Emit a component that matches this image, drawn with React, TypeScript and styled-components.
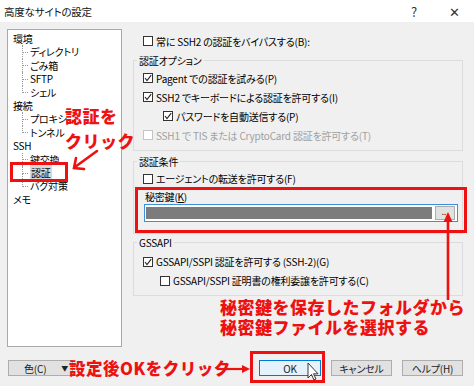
import React from 'react';
import styled, { createGlobalStyle, css } from 'styled-components';

// ベースのUIフォント
const UI_FONT = `"Noto Sans CJK JP", "Noto Sans", sans-serif`;
const RED = '#ee1111';

const GlobalStyle = createGlobalStyle`
  html, body {
    margin: 0;
    padding: 0;
    background: #f0f0f0;
  }
  #root {
    width: 474px;
    height: 386px;
  }
`;

const Window = styled.div`
  position: relative;
  width: 474px;
  height: 386px;
  background: #f0f0f0;
  font-family: ${UI_FONT};
  font-size: 10px;
  letter-spacing: -0.2px;
  font-feature-settings: 'palt';
  color: #000;
  overflow: hidden;
  display: flex;
  flex-direction: column;
  box-sizing: border-box;
`;

const TitleBar = styled.div`
  height: 22px;
  background: #fff;
  display: flex;
  align-items: center;
  padding-left: 4px;
  font-size: 10.5px;
  color: #111;
`;

const Title = styled.div`
  flex: 1;
`;

const TitleButton = styled.div`
  width: 40px;
  text-align: center;
  font-size: 13px;
  color: #333;
`;

const Main = styled.div`
  display: flex;
  gap: 11px;
  padding: 7px 0 0 7px;
`;

const Tree = styled.div`
  width: 115px;
  height: 318px;
  box-sizing: border-box;
  background: #fff;
  border: 1px solid #a9a9a9;
  padding-top: 2px;
`;

const TreeItem = styled.div<{ $child?: boolean; $last?: boolean }>`
  position: relative;
  height: 13.4px;
  line-height: 13.4px;
  padding-left: ${p => (p.$child ? 22 : 5)}px;
  white-space: nowrap;
  ${p =>
    p.$child &&
    css`
      &::before {
        content: '';
        position: absolute;
        left: 14px;
        top: 0;
        width: 5px;
        height: 50%;
        border-left: 1px dotted #9a9a9a;
        border-bottom: 1px dotted #9a9a9a;
      }
    `}
  ${p =>
    p.$child &&
    !p.$last &&
    css`
      &::after {
        content: '';
        position: absolute;
        left: 14px;
        top: 50%;
        bottom: 0;
        border-left: 1px dotted #9a9a9a;
      }
    `}
`;

const Selected = styled.span`
  background: #d9d9d9;
  padding: 0 1px;
`;

const Right = styled.div`
  width: 330px;
  display: flex;
  flex-direction: column;
  padding-top: 5px;
`;

const Row = styled.div<{ $indent?: number; $h?: number; $disabled?: boolean }>`
  display: flex;
  align-items: center;
  gap: 3px;
  height: ${p => p.$h ?? 19}px;
  padding-left: ${p => p.$indent ?? 9}px;
  color: ${p => (p.$disabled ? '#a0a0a0' : '#000')};
  white-space: nowrap;
`;

const Box = styled.span<{ $disabled?: boolean }>`
  width: 10px;
  height: 10px;
  box-sizing: border-box;
  border: 1px solid ${p => (p.$disabled ? '#c4c4c4' : '#333')};
  background: #fff;
  display: inline-flex;
  align-items: center;
  justify-content: center;
  flex: none;
`;

const Check = ({ checked, disabled }: { checked?: boolean; disabled?: boolean }) => (
  <Box $disabled={disabled}>
    {checked && (
      <svg width="8" height="8" viewBox="0 0 8 8">
        <polyline points="1,4 3,6.5 7.2,1.2" fill="none" stroke="#222" strokeWidth="1.1" />
      </svg>
    )}
  </Box>
);

const Group = styled.fieldset<{ $mt: number; $pt: number; $pb: number }>`
  margin: ${p => p.$mt}px 0 0 0;
  padding: ${p => p.$pt}px 0 ${p => p.$pb}px 0;
  border: 1px solid #dcdcdc;
  min-width: 0;
`;

const Legend = styled.legend`
  margin-left: 3px;
  padding: 0 2px;
  line-height: 13px;
  font-size: 10px;
`;

const KeyLabel = styled.div`
  height: 14px;
  line-height: 14px;
  margin-top: 1.5px;
  padding-left: 11px;
`;

const KeyField = styled.div`
  margin-left: 10px;
  width: 314px;
  height: 18px;
  box-sizing: border-box;
  border: 1px solid #3c8fdc;
  background: #fff;
  display: flex;
  align-items: center;
  gap: 3px;
  padding: 0 2px 0 1px;
`;

const KeyValue = styled.div`
  flex: 1;
  height: 12px;
  background: #7c7c7c;
`;

const BrowseButton = styled.div`
  width: 20px;
  height: 14px;
  box-sizing: border-box;
  background: #e1e1e1;
  border: 1px solid #adadad;
  font-size: 9px;
  line-height: 10px;
  text-align: center;
  color: #333;
`;

const Footer = styled.div`
  display: flex;
  align-items: center;
  gap: 10px;
  padding: 13px 11px 0 8px;
`;

const Button = styled.div<{ $w: number; $primary?: boolean }>`
  width: ${p => p.$w}px;
  height: 16px;
  box-sizing: border-box;
  background: ${p => (p.$primary ? '#e5f1fb' : '#e1e1e1')};
  border: 1px solid ${p => (p.$primary ? '#0078d7' : '#adadad')};
  display: flex;
  align-items: center;
  justify-content: center;
  font-size: 10px;
  color: #222;
  white-space: nowrap;
`;

const ColorButton = styled(Button)`
  justify-content: space-between;
  padding: 0 4px 0 15px;
`;

const Caret = styled.span`
  font-size: 7px;
  color: #222;
`;

const Spacer = styled.div`
  flex: 1;
`;

// 赤い注釈（スクショの上に重ねたもの）
const Note = styled.div<{ $x: number; $y: number; $size?: number }>`
  position: absolute;
  left: ${p => p.$x}px;
  top: ${p => p.$y}px;
  font-family: ${UI_FONT};
  font-feature-settings: normal;
  font-weight: 900;
  font-size: ${p => p.$size ?? 17}px;
  line-height: 1;
  letter-spacing: 0.5px;
  color: ${RED};
  white-space: nowrap;
`;

const RedFrame = styled.div<{ $x: number; $y: number; $w: number; $h: number }>`
  position: absolute;
  left: ${p => p.$x}px;
  top: ${p => p.$y}px;
  width: ${p => p.$w}px;
  height: ${p => p.$h}px;
  box-sizing: border-box;
  border: 3px solid ${RED};
`;

const Overlay = styled.svg`
  position: absolute;
  left: 0;
  top: 0;
  pointer-events: none;
`;

function App() {
  return (
    <>
      <GlobalStyle />
      <Window>
        <TitleBar>
          <Title>高度なサイトの設定</Title>
          <TitleButton>?</TitleButton>
          <TitleButton>✕</TitleButton>
        </TitleBar>

        <Main>
          <Tree>
            <TreeItem>環境</TreeItem>
            <TreeItem $child>ディレクトリ</TreeItem>
            <TreeItem $child>ごみ箱</TreeItem>
            <TreeItem $child>SFTP</TreeItem>
            <TreeItem $child $last>シェル</TreeItem>
            <TreeItem>接続</TreeItem>
            <TreeItem $child>プロキシ</TreeItem>
            <TreeItem $child $last>トンネル</TreeItem>
            <TreeItem>SSH</TreeItem>
            <TreeItem $child>鍵交換</TreeItem>
            <TreeItem $child>
              <Selected>認証</Selected>
            </TreeItem>
            <TreeItem $child $last>バグ対策</TreeItem>
            <TreeItem>メモ</TreeItem>
          </Tree>

          <Right>
            <Row $h={14} $indent={10}>
              <Check />
              常に SSH2 の認証をバイパスする(B):
            </Row>

            <Group $mt={5.5} $pt={2} $pb={5}>
              <Legend>認証オプション</Legend>
              <Row>
                <Check checked />
                Pagent での認証を試みる(P)
              </Row>
              <Row>
                <Check checked />
                SSH2 でキーボードによる認証を許可する(I)
              </Row>
              <Row $indent={29}>
                <Check checked />
                パスワードを自動送信する(P)
              </Row>
              <Row $disabled>
                <Check disabled />
                SSH1 で TIS または CryptoCard 認証を許可する(T)
              </Row>
            </Group>

            <Group $mt={4.5} $pt={1} $pb={11}>
              <Legend>認証条件</Legend>
              <Row>
                <Check />
                エージェントの転送を許可する(F)
              </Row>
              <KeyLabel>
                秘密鍵(<u>K</u>)
              </KeyLabel>
              <KeyField>
                <KeyValue />
                <BrowseButton>...</BrowseButton>
              </KeyField>
            </Group>

            <Group $mt={2.5} $pt={3} $pb={5}>
              <Legend>GSSAPI</Legend>
              <Row>
                <Check checked />
                GSSAPI/SSPI 認証を許可する (SSH-2)(G)
              </Row>
              <Row $indent={26}>
                <Check />
                GSSAPI/SSPI 証明書の権利委譲を許可する(C)
              </Row>
            </Group>
          </Right>
        </Main>

        <Footer>
          <ColorButton $w={65}>
            色(C)
            <Caret>▼</Caret>
          </ColorButton>
          <Spacer />
          <Button $w={62} $primary>
            OK
          </Button>
          <Button $w={61}>キャンセル</Button>
          <Button $w={61}>ヘルプ(H)</Button>
        </Footer>

        {/* 注釈 */}
        <RedFrame $x={10} $y={162} $w={58} $h={20} />
        <RedFrame $x={135} $y={187} $w={332} $h={46} />
        <RedFrame $x={250} $y={351} $w={75} $h={32} />

        <Note $x={65} $y={107}>認証を</Note>
        <Note $x={65} $y={132}>クリック</Note>
        <Note $x={220} $y={298}>秘密鍵を保存したフォルダから</Note>
        <Note $x={220} $y={318}>秘密鍵ファイルを選択する</Note>
        <Note $x={69} $y={360} $size={16.5}>設定後OKをクリック</Note>

        <Overlay width="474" height="386" viewBox="0 0 474 386">
          {/* 認証への矢印 */}
          <g stroke={RED} strokeWidth="2.6" fill="none" strokeLinecap="round">
            <line x1="97" y1="151" x2="75" y2="167" />
            <polyline points="76,158 74,168 84,169" />
          </g>
          {/* 参照ボタンへの矢印 */}
          <line x1="448" y1="300" x2="448" y2="221" stroke={RED} strokeWidth="2.6" />
          <polygon points="448,212 443.5,222 452.5,222" fill={RED} />
          {/* OKへの矢印 */}
          <line x1="217" y1="369" x2="244" y2="369" stroke={RED} strokeWidth="2.2" />
          <polygon points="250,369 242,365 242,373" fill={RED} />
          {/* マウスカーソル */}
          <path
            d="M308 363 L308 378 L311.5 374.5 L314 380 L316 379 L313.5 373.8 L318 373.8 Z"
            fill="#fff"
            stroke="#222"
            strokeWidth="0.9"
            strokeLinejoin="round"
          />
        </Overlay>
      </Window>
    </>
  );
}

export default App;
